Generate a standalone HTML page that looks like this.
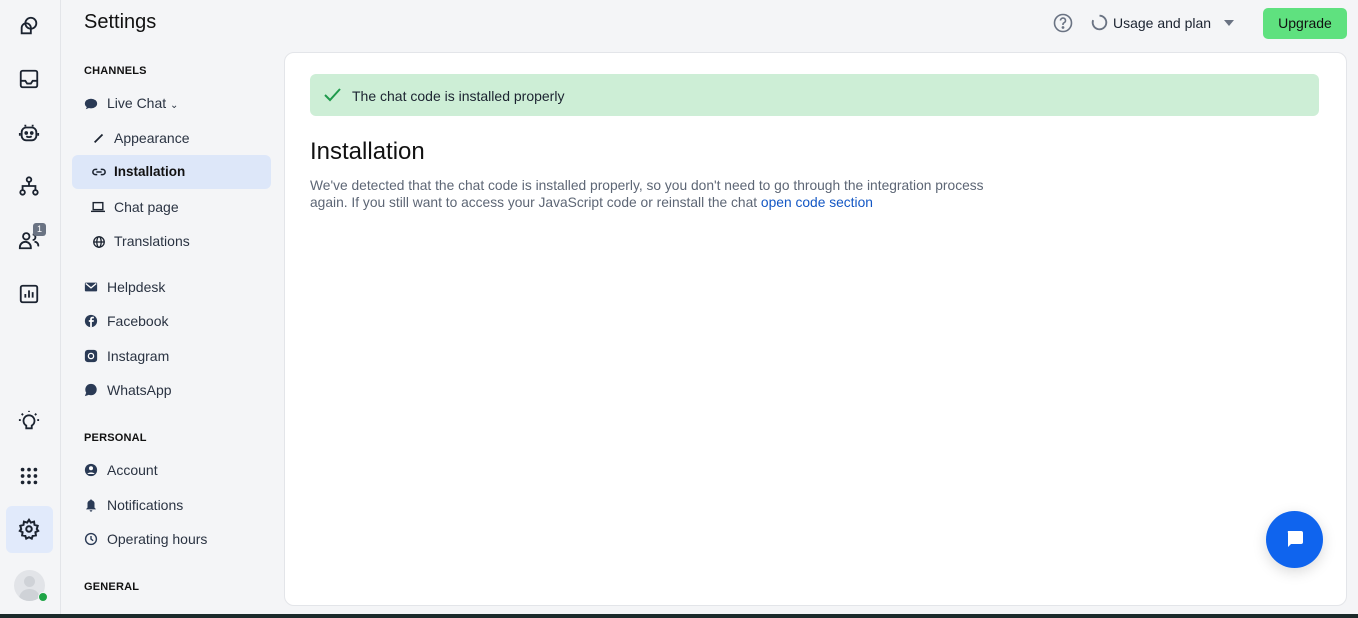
<!DOCTYPE html><html><head><meta charset="utf-8"><style>
*{margin:0;padding:0;box-sizing:border-box}
body{width:1358px;height:618px;overflow:hidden;background:#f4f5f7;font-family:"Liberation Sans",sans-serif;color:#1b2330;position:relative}
.a{position:absolute}
.rail{left:0;top:0;width:61px;height:618px;border-right:1px solid #e3e5e9;background:#f4f5f7}
.ic{position:absolute;left:18px;width:22px;height:22px}
.t{position:absolute;font-size:14px;color:#2a3342;white-space:nowrap}
.h{position:absolute;font-size:11px;font-weight:bold;color:#111;left:84px;letter-spacing:.2px}
.si{position:absolute;width:14px;height:14px}
</style></head><body>
<div class="a rail">
<svg class="ic" style="top:15px" viewBox="0 0 24 24" fill="none" stroke="#1b2330" stroke-width="2"><circle cx="14" cy="9" r="6"/><path d="M4 20v-6a5 5 0 0 1 10 0v6z"/></svg>
<svg class="ic" style="top:68px" viewBox="0 0 24 24" fill="none" stroke="#1b2330" stroke-width="2"><rect x="3" y="3" width="18" height="18" rx="2"/><path d="M3 14h5l2 3h4l2-3h5"/></svg>
<svg class="ic" style="top:122px" viewBox="0 0 24 24" fill="none" stroke="#1b2330" stroke-width="2"><rect x="4" y="6" width="16" height="14" rx="5"/><circle cx="9" cy="12" r="1" fill="#1b2330"/><circle cx="15" cy="12" r="1" fill="#1b2330"/><path d="M9 15.5q3 2 6 0M8 3v2M16 3v2M2 12v3M22 12v3"/></svg>
<svg class="ic" style="top:175px" viewBox="0 0 24 24" fill="none" stroke="#1b2330" stroke-width="2"><circle cx="12" cy="5" r="2.5"/><circle cx="5" cy="19" r="2.5"/><circle cx="19" cy="19" r="2.5"/><path d="M12 8v4M5 16v-4h14v4"/></svg>
<svg class="ic" style="top:229px" viewBox="0 0 24 24" fill="none" stroke="#1b2330" stroke-width="2"><circle cx="9" cy="8" r="3.5"/><path d="M2 21v-1a6 6 0 0 1 12 0v1zM16 12a3 3 0 0 0 0-6M18 14a4 4 0 0 1 4 5"/></svg>
<div class="a" style="left:33px;top:223px;width:13px;height:13px;border-radius:3px;background:#6a7383;color:#fff;font-size:9px;text-align:center;line-height:13px">1</div>
<svg class="ic" style="top:283px" viewBox="0 0 24 24" fill="none" stroke="#1b2330" stroke-width="2"><rect x="3" y="3" width="18" height="18" rx="2"/><path d="M8 16v-4M12 16V8M16 16v-6"/></svg>
<svg class="ic" style="top:410px" viewBox="0 0 24 24" fill="none" stroke="#1b2330" stroke-width="2"><path d="M9 17a6 6 0 1 1 6 0v3H9z"/><path d="M1 11h2M21 11h2M4 4l1.5 1.5M20 4l-1.5 1.5M12 1v1"/></svg>
<svg class="ic" style="top:465px" viewBox="0 0 24 24" fill="#1b2330"><circle cx="5" cy="5" r="2"/><circle cx="12" cy="5" r="2"/><circle cx="19" cy="5" r="2"/><circle cx="5" cy="12" r="2"/><circle cx="12" cy="12" r="2"/><circle cx="19" cy="12" r="2"/><circle cx="5" cy="19" r="2"/><circle cx="12" cy="19" r="2"/><circle cx="19" cy="19" r="2"/></svg>
<div class="a" style="left:6px;top:506px;width:47px;height:47px;border-radius:6px;background:#e1eafb"></div>
<svg class="ic" style="top:518px" viewBox="0 0 24 24" fill="none" stroke="#1b2330" stroke-width="2.2"><circle cx="12" cy="12" r="3"/><path d="M12 2l2 3 3.5-1 .5 3.5 3.5 1-1 3.5 1.5 2-3 1.5.5 3.5-3.5.5-1 3-3-1.5-3 1.5-1-3-3.5-.5.5-3.5-3-1.5 1.5-2-1-3.5 3.5-1 .5-3.5 3.5 1z"/></svg>
<div class="a" style="left:14px;top:570px;width:31px;height:31px;border-radius:50%;background:#e2e4e8;overflow:hidden"><div class="a" style="left:10px;top:6px;width:11px;height:11px;border-radius:50%;background:#cfd2d7"></div><div class="a" style="left:5px;top:19px;width:21px;height:14px;border-radius:10px 10px 0 0;background:#cfd2d7"></div></div>
<div class="a" style="left:38px;top:592px;width:10px;height:10px;border-radius:50%;background:#1ea446;border:1.5px solid #f4f5f7"></div>
</div>
<div class="a" style="left:84px;top:11px;font-size:20px;color:#111">Settings</div>
<div class="h" style="top:65px">CHANNELS</div>
<svg class="si" style="left:84px;top:97px" viewBox="0 0 16 16"><ellipse cx="8" cy="7.5" rx="7" ry="5.5" fill="#2a3a55"/><path d="M2 14l2-4 3 2z" fill="#2a3a55"/></svg>
<div class="t" style="left:107px;top:95px">Live Chat <span style="font-size:10px">⌄</span></div>
<svg class="si" style="left:92px;top:131px" viewBox="0 0 16 16" stroke="#1b2330" stroke-width="2"><path d="M3 13l9-9"/></svg>
<div class="t" style="left:114px;top:130px">Appearance</div>
<div class="a" style="left:72px;top:155px;width:199px;height:34px;border-radius:6px;background:#dde7f9"></div>
<svg class="si" style="left:92px;top:165px" viewBox="0 0 16 16" fill="none" stroke="#1b2330" stroke-width="1.8"><path d="M6 5H4a3 3 0 0 0 0 6h2M10 5h2a3 3 0 0 1 0 6h-2M5 8h6"/></svg>
<div class="t" style="left:114px;top:164px;color:#111;font-weight:bold;font-size:13.5px">Installation</div>
<svg class="si" style="left:91px;top:200px" viewBox="0 0 16 16" fill="none" stroke="#1b2330" stroke-width="1.6"><rect x="2.5" y="3" width="11" height="8"/><path d="M0 13h16"/></svg>
<div class="t" style="left:114px;top:199px">Chat page</div>
<svg class="si" style="left:92px;top:235px" viewBox="0 0 16 16" fill="none" stroke="#1b2330" stroke-width="1.5"><circle cx="8" cy="8" r="6"/><ellipse cx="8" cy="8" rx="2.5" ry="6"/><path d="M2 8h12"/></svg>
<div class="t" style="left:114px;top:233px">Translations</div>
<svg class="si" style="left:84px;top:280px" viewBox="0 0 16 16"><rect x="1" y="3" width="14" height="10" rx="1" fill="#2a3a55"/><path d="M2 4l6 5 6-5" stroke="#fff" stroke-width="1.5" fill="none"/></svg>
<div class="t" style="left:107px;top:279px">Helpdesk</div>
<svg class="si" style="left:84px;top:314px" viewBox="0 0 16 16"><circle cx="8" cy="8" r="7" fill="#2a3a55"/><path d="M9 15V9h2l.3-2H9V6c0-.6.3-1 1-1h1.3V3.2H9.8C8 3.2 7 4.2 7 6v1H5.5v2H7v6" fill="#fff"/></svg>
<div class="t" style="left:107px;top:313px">Facebook</div>
<svg class="si" style="left:84px;top:349px" viewBox="0 0 16 16"><rect x="1" y="1" width="14" height="14" rx="3.5" fill="#2a3a55"/><circle cx="8" cy="8" r="3" fill="none" stroke="#fff" stroke-width="1.5"/></svg>
<div class="t" style="left:107px;top:348px">Instagram</div>
<svg class="si" style="left:84px;top:383px" viewBox="0 0 16 16"><circle cx="8" cy="7.5" r="6.5" fill="#2a3a55"/><path d="M1 15l1.5-4 3 2.5z" fill="#2a3a55"/></svg>
<div class="t" style="left:107px;top:382px">WhatsApp</div>
<div class="h" style="top:432px">PERSONAL</div>
<svg class="si" style="left:84px;top:463px" viewBox="0 0 16 16"><circle cx="8" cy="8" r="7" fill="#2a3a55"/><circle cx="8" cy="6" r="2.3" fill="#fff"/><path d="M3.8 12.5a5 4 0 0 1 8.4 0" fill="#fff"/></svg>
<div class="t" style="left:107px;top:462px">Account</div>
<svg class="si" style="left:84px;top:498px" viewBox="0 0 16 16" fill="#2a3a55"><path d="M8 1.5a1 1 0 0 1 1 1A4 4 0 0 1 12 7v4l1.5 1.5v.5h-11v-.5L4 11V7a4 4 0 0 1 3-4.5 1 1 0 0 1 1-1zM6.5 14h3a1.5 1.5 0 0 1-3 0z"/></svg>
<div class="t" style="left:107px;top:497px">Notifications</div>
<svg class="si" style="left:84px;top:532px" viewBox="0 0 16 16" fill="none" stroke="#2a3a55" stroke-width="1.6"><circle cx="8" cy="8" r="6.2"/><path d="M8 4.5V8l2.5 2"/></svg>
<div class="t" style="left:107px;top:531px">Operating hours</div>
<div class="h" style="top:581px">GENERAL</div>
<div class="a" style="left:284px;top:52px;width:1063px;height:554px;background:#fff;border:1px solid #e3e5e9;border-radius:10px"></div>
<div class="a" style="left:310px;top:74px;width:1009px;height:42px;background:#cdeed6;border-radius:6px"></div>
<svg class="a" style="left:323px;top:86px;width:19px;height:18px" viewBox="0 0 19 18" fill="none" stroke="#1f9a4c" stroke-width="2"><path d="M2 9l5 5L17 3"/></svg>
<div class="a" style="left:352px;top:88px;font-size:14px;color:#1b2330">The chat code is installed properly</div>
<div class="a" style="left:310px;top:138px;font-size:24px;color:#111">Installation</div>
<div class="a" style="left:310px;top:177px;font-size:13.8px;line-height:17px;color:#5d6675;width:688px">We've detected that the chat code is installed properly, so you don't need to go through the integration process again. If you still want to access your JavaScript code or reinstall the chat <span style="color:#1357c4">open code section</span></div>
<svg class="a" style="left:1053px;top:13px;width:20px;height:20px" viewBox="0 0 20 20" fill="none" stroke="#6a7383" stroke-width="1.6"><circle cx="10" cy="10" r="8.5"/><path d="M7.5 7.5a2.5 2.5 0 1 1 3.5 2.3c-.7.3-1 .8-1 1.5v.7"/><circle cx="10" cy="14.5" r=".6" fill="#6a7383"/></svg>
<svg class="a" style="left:1091px;top:14px;width:17px;height:17px" viewBox="0 0 20 20" fill="none" stroke="#6a7383" stroke-width="2.2"><path d="M10 2a8 8 0 1 1-7.5 5.2"/></svg>
<div class="a" style="left:1113px;top:15px;font-size:14px;color:#1b2330">Usage and plan</div>
<div class="a" style="left:1224px;top:20px;width:0;height:0;border-left:5px solid transparent;border-right:5px solid transparent;border-top:6px solid #6a7383"></div>
<div class="a" style="left:1263px;top:8px;width:84px;height:31px;background:#5fe17f;border-radius:5px;font-size:14px;text-align:center;line-height:31px;color:#111">Upgrade</div>
<div class="a" style="left:1266px;top:511px;width:57px;height:57px;border-radius:50%;background:#0f64ee;box-shadow:0 4px 14px rgba(0,0,0,.15)"></div>
<svg class="a" style="left:1284px;top:529px;width:21px;height:21px" viewBox="0 0 21 21"><path d="M4 2h13a2 2 0 0 1 2 2v9a2 2 0 0 1-2 2H7l-3 3V4a2 2 0 0 1 0-2z" fill="#fff"/></svg>
<div class="a" style="left:0;top:614px;width:1358px;height:4px;background:#1b2a2a"></div>
</body></html>
